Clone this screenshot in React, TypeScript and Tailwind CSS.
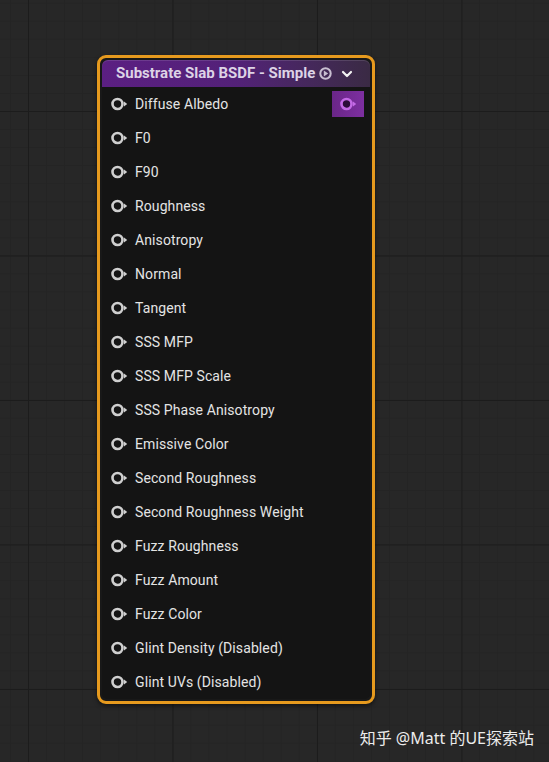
import React from 'react'

type pin = {
    label: string
    out?: boolean
}

const inputs: pin[] = [
    { label: 'Diffuse Albedo', out: true },
    { label: 'F0' },
    { label: 'F90' },
    { label: 'Roughness' },
    { label: 'Anisotropy' },
    { label: 'Normal' },
    { label: 'Tangent' },
    { label: 'SSS MFP' },
    { label: 'SSS MFP Scale' },
    { label: 'SSS Phase Anisotropy' },
    { label: 'Emissive Color' },
    { label: 'Second Roughness' },
    { label: 'Second Roughness Weight' },
    { label: 'Fuzz Roughness' },
    { label: 'Fuzz Amount' },
    { label: 'Fuzz Color' },
    { label: 'Glint Density (Disabled)' },
    { label: 'Glint UVs (Disabled)' },
]

// little ring + arrow used for every pin
const PinIcon = ({ ring, fill }: { ring: string; fill: string }) => (
    <svg width="18" height="16" viewBox="0 0 18 16">
        <circle cx="6.5" cy="8" r="5" fill={fill} stroke={ring} strokeWidth="2.6" />
        <path d="M13 5.4 L16.2 8 L13 10.6 Z" fill={ring} />
    </svg>
)

const Row = ({ label, out }: pin) => (
    <div className="flex h-[34px] items-center justify-between pl-[9px] pr-[6px]">
        <div className="flex items-center gap-[6px]">
            <PinIcon ring="#cfcfcf" fill="#151515" />
            <span className="text-[14px] tracking-[0.1px] text-[#e4e4e4]">{label}</span>
        </div>
        {out && (
            <div className="flex h-[26px] w-[32px] items-center justify-center bg-gradient-to-r from-[#6a2688] to-[#7d2fa0] pl-[2px]">
                <PinIcon ring="#c46ae6" fill="#2c0c3a" />
            </div>
        )}
    </div>
)

const App: React.FC = () => {
    return (
        <div
            className="relative h-[762px] w-full overflow-hidden bg-[#272727] bg-[linear-gradient(to_right,#1c1c1c_1px,transparent_1px),linear-gradient(to_bottom,#1c1c1c_1px,transparent_1px),linear-gradient(to_right,#242424_1px,transparent_1px),linear-gradient(to_bottom,#242424_1px,transparent_1px)] bg-[size:144.5px_144.5px,144.5px_144.5px,18.06px_18.06px,18.06px_18.06px] bg-[position:28px_111px]"
            style={{ fontFamily: 'Roboto, "Noto Sans", sans-serif' }}
        >
            {/* material node */}
            <div className="absolute left-[97px] top-[55px] w-[278px] rounded-[9px] border-[3px] border-[#e69a1e] bg-[#181818] p-[2px] shadow-[0_2px_4px_rgba(0,0,0,0.5)]">
                <div className="flex h-[27px] items-center rounded-t-[6px] bg-gradient-to-r from-[#5b1f82] via-[#532178] to-[#3a2a44] pl-[14px] pr-[10px] shadow-[inset_0_1px_0_rgba(255,255,255,0.12)]">
                    <span className="text-[15px] font-bold text-[#ddd3e6]">Substrate Slab BSDF - Simple</span>
                    <svg width="13" height="13" viewBox="0 0 14 14" className="ml-[4px]">
                        <circle cx="7" cy="7" r="5.6" fill="none" stroke="#c8bfd0" strokeWidth="2.2" />
                        <path d="M5.2 3.9 L9.9 7 L5.2 10.1 Z" fill="#c8bfd0" />
                    </svg>
                    <svg width="12" height="12" viewBox="0 0 12 12" className="ml-[9px]">
                        <path d="M2 4 L6 8 L10 4" fill="none" stroke="#f2f2f2" strokeWidth="2.2" strokeLinecap="round" strokeLinejoin="round" />
                    </svg>
                </div>
                <div className="rounded-b-[5px] bg-[#141414]">
                    {inputs.map((p, i) => (
                        <Row key={i} label={p.label} out={p.out} />
                    ))}
                </div>
            </div>

            <div
                className="absolute bottom-[12px] right-[15px] text-[16px] text-[#ececec]"
                style={{ fontFamily: '"Noto Sans", "Noto Sans CJK SC", sans-serif' }}
            >
                知乎 @Matt 的UE探索站
            </div>
        </div>
    )
}

export default App
